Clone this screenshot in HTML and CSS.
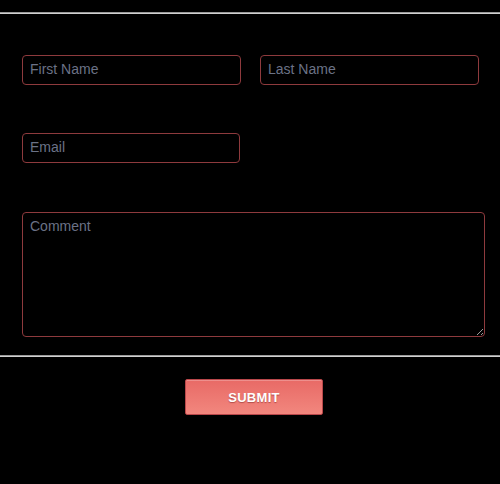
FILE: index.html
```html
<!DOCTYPE html>
<html lang="en">
  <head>
    <meta charset="UTF-8" />
    <meta name="viewport" content="width=device-width, initial-scale=1.0" />
    <link rel="stylesheet" href="styles.css">
    <title>Contact</title>
  </head>
  <body>
    <hr class="rule" />
    <form class="contactForm" action="#" method="get">
      <div class="nameRow">
        <input type="text" name="first" placeholder="First Name" />
        <input type="text" name="last" placeholder="Last Name" />
      </div>
      <div class="emailRow">
        <input type="email" name="email" placeholder="Email" />
      </div>
      <div class="commentRow">
        <textarea name="comment" placeholder="Comment"></textarea>
      </div>
    </form>
    <hr class="rule" />
    <div class="actions">
      <button type="submit" class="submitBtn">SUBMIT</button>
    </div>
  </body>
</html>
```

FILE: styles.css
```css
* {
  box-sizing: border-box;
  font-family: "Liberation Sans", Arial, sans-serif;
}
body {
  margin: 0;
  background: #000;
  color: #fff;
}

.rule {
  margin: 12px 0 0;
  height: 0;
  border: 0;
  border-top: 1px solid #9a9a9a;
  border-bottom: 1px solid #d0d0d0;
}

.contactForm {
  padding: 0 16px 0 22px;
}

input,
textarea {
  display: block;
  background: #000;
  color: #fff;
  border: 1px solid #8e3a3d;
  border-radius: 4px;
  outline: none;
  font-size: 14px;
  padding: 0 7px;
}
input {
  height: 30px;
  padding-bottom: 2px;
}
input::placeholder,
textarea::placeholder {
  color: #6b7286;
}

.nameRow {
  margin-top: 41px;
  display: grid;
  grid-template-columns: 219px 219px;
  gap: 19px;
}
.emailRow {
  margin-top: 48px;
}
.emailRow input {
  width: 218px;
}
.commentRow {
  margin-top: 49px;
}
textarea {
  width: 463px;
  height: 125px;
  padding: 5px 7px;
  resize: both;
}

.contactForm + .rule {
  margin-top: 18px;
}

.actions {
  display: flex;
  justify-content: center;
  padding: 22px 0 0 8px;
}
.submitBtn {
  width: 138px;
  height: 36px;
  border: 1px solid #b9474a;
  border-radius: 2px;
  background: linear-gradient(#e86a66, #f2877e);
  box-shadow: inset 0 1px 0 rgba(255, 255, 255, 0.25);
  color: #fff;
  font-size: 13px;
  font-weight: bold;
  letter-spacing: 0.3px;
  text-shadow: 0 1px 1px rgba(120, 30, 30, 0.5);
  cursor: pointer;
}
```
